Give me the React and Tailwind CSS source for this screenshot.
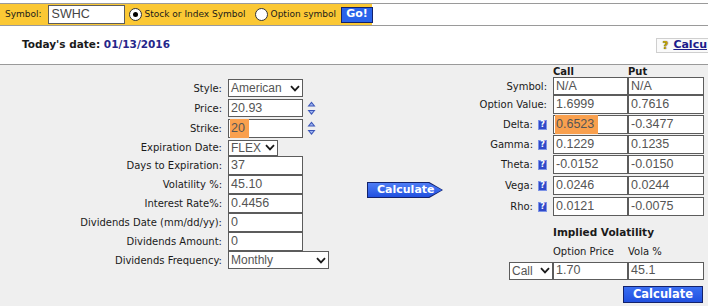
const Chevron = () => (
  <svg width="10" height="7" viewBox="0 0 10 7" className="shrink-0">
    <path d="M1 1.2 5 5.4 9 1.2" fill="none" stroke="#1a1a1a" strokeWidth="1.8" />
  </svg>
);

const Spinner = () => (
  <svg width="9" height="15" viewBox="0 0 9 15" className="shrink-0">
    <path d="M4.5 0.5 8.5 5.5 H0.5 Z" fill="#3b55b8" />
    <path d="M2.5 4.5 4.5 2.3 6.5 4.5Z" fill="#9fb4f0" />
    <path d="M0.5 9 H8.5 L4.5 14 Z" fill="#3b55b8" />
    <path d="M2.5 10 H6.5 L4.5 12.2Z" fill="#9fb4f0" />
  </svg>
);

const Help = () => (
  <span className="mr-[5px] flex h-[10px] w-[9px] items-center justify-center border border-[#7d93e6] bg-[#2f49c9] text-[8px] font-bold leading-none text-white">
    ?
  </span>
);

function Box({ children, w = 'w-[75px]', hl }) {
  return (
    <div className={`flex h-full ${w} items-center border border-[#5c5c5c] bg-white pl-[1px] font-['Liberation_Sans',sans-serif] text-[12.5px] text-[#555]`}>
      <span className={hl ? 'bg-[#f9a04e] pl-[1px] pr-[4px]' : 'pl-[1px]'}>{children}</span>
    </div>
  );
}

function Select({ children, w }) {
  return (
    <div className={`flex h-full ${w} items-center justify-between gap-[2px] border border-[#5c5c5c] bg-white pl-[2px] pr-[2px] font-['Liberation_Sans',sans-serif] text-[12px] text-[#555]`}>
      <span>{children}</span>
      <Chevron />
    </div>
  );
}

function Row({ label, h, children }) {
  return (
    <div className={`flex ${h} items-stretch`}>
      <div className="flex w-[228px] items-center justify-end whitespace-nowrap pr-[6px]">{label}</div>
      <div className="flex items-center gap-[4px]">{children}</div>
    </div>
  );
}

function GreekRow({ label, help, call, put, h = 'h-[19px]', mt = '', hl }) {
  return (
    <div className={`flex ${h} ${mt}`}>
      <div className="flex w-[103px] items-center justify-end pr-[1px]">
        <span className="mr-[5px]">{label}</span>
        {help && <Help />}
      </div>
      <Box hl={hl}>{call}</Box>
      <Box w="w-[76px]">{put}</Box>
    </div>
  );
}

export default function App() {
  return (
    <div className="h-[306px] w-[708px] overflow-hidden bg-white font-['DejaVu_Sans',sans-serif] text-[10px] text-[#1a1a1a]">
      {/* symbol bar */}
      <div className="mt-[3px] flex h-[23px] border-y border-[#9a9a9a]">
        <div className="flex w-[372px] shrink-0 items-center whitespace-nowrap bg-[#fbc834] pl-[5px] text-[9px]">
          <span className="shrink-0">Symbol:</span>
          <div className="ml-[6px] flex h-[19px] w-[77px] shrink-0 items-center border border-[#5c5c5c] bg-white pl-[3px] font-['Liberation_Sans',sans-serif] text-[12.5px] text-[#444]">
            SWHC
          </div>
          <span className="ml-[4px] flex h-[13px] w-[13px] shrink-0 items-center justify-center rounded-full border border-[#333] bg-white">
            <span className="h-[5px] w-[5px] rounded-full bg-black" />
          </span>
          <span className="ml-[3px] shrink-0">Stock or Index Symbol</span>
          <span className="ml-[9px] h-[13px] w-[13px] shrink-0 rounded-full border border-[#333] bg-white" />
          <span className="ml-[3px] shrink-0">Option symbol</span>
          <span className="ml-[5px] flex h-[16px] w-[32px] shrink-0 items-center justify-center border border-[#13226b] bg-[#2a63ea] text-[11px] font-bold text-white">
            Go!
          </span>
        </div>
      </div>

      {/* date line */}
      <div className="flex h-[39px] items-center justify-between border-b border-[#9a9a9a]">
        <div className="pl-[22px] text-[10.5px] font-bold">
          Today's date: <span className="text-[#26268a]">01/13/2016</span>
        </div>
        <div className="mr-[-24px] flex h-[15px] shrink-0 items-center whitespace-nowrap border border-[#cfcfcf] bg-[#fafafa] pl-[6px] pr-[24px]">
          <span className="font-bold text-[#c9a400] [text-shadow:0_0_1px_#222]">?</span>
          <span className="ml-[5px] text-[11px] font-bold text-[#1c1c8a] underline">Calcu</span>
        </div>
      </div>

      {/* calculator */}
      <div className="flex h-[241px] bg-[#efefef]">
        <div className="w-[345px] shrink-0 pt-[13px]">
          <Row label="Style:" h="h-[20px]">
            <div className="h-[18px]"><Select w="w-[75px]">American</Select></div>
          </Row>
          <Row label="Price:" h="h-[20px]">
            <div className="h-[18px]"><Box>20.93</Box></div>
            <Spinner />
          </Row>
          <Row label="Strike:" h="h-[21px]">
            <div className="h-[19px]"><Box hl>20</Box></div>
            <Spinner />
          </Row>
          <Row label="Expiration Date:" h="h-[17px]">
            <div className="h-[16px]"><Select w="w-[50px]">FLEX</Select></div>
          </Row>
          <Row label="Days to Expiration:" h="h-[19px]">
            <div className="h-[19px]"><Box>37</Box></div>
          </Row>
          <Row label="Volatility %:" h="h-[19px]">
            <div className="h-[19px]"><Box>45.10</Box></div>
          </Row>
          <Row label="Interest Rate%:" h="h-[19px]">
            <div className="h-[19px]"><Box>0.4456</Box></div>
          </Row>
          <Row label="Dividends Date (mm/dd/yy):" h="h-[19px]">
            <div className="h-[19px]"><Box>0</Box></div>
          </Row>
          <Row label="Dividends Amount:" h="h-[19px]">
            <div className="h-[19px]"><Box>0</Box></div>
          </Row>
          <Row label="Dividends Frequency:" h="h-[18px]">
            <div className="h-[18px]"><Select w="w-[101px]">Monthly</Select></div>
          </Row>
        </div>

        <div className="w-[105px] shrink-0 pl-[22px] pt-[117px]">
          <div className="relative h-[16px] w-[76px] bg-[#13226b] [clip-path:polygon(0_0,82%_0,100%_50%,82%_100%,0_100%)]">
            <div className="absolute inset-[1px] flex items-center bg-gradient-to-b from-[#4f7df5] to-[#2150e0] pl-[9px] text-[11px] font-bold text-white [clip-path:polygon(0_0,82%_0,100%_50%,82%_100%,0_100%)]">
              Calculate
            </div>
          </div>
        </div>

        <div className="flex-1">
          <div className="flex h-[12px] items-end font-bold">
            <span className="ml-[103px] w-[75px] leading-none">Call</span>
            <span className="leading-none">Put</span>
          </div>
          <GreekRow label="Symbol:" call="N/A" put="N/A" h="h-[18px]" />
          <GreekRow label="Option Value:" call="1.6999" put="0.7616" />
          <GreekRow label="Delta:" help call="0.6523" put="-0.3477" mt="mt-[1px]" hl />
          <GreekRow label="Gamma:" help call="0.1229" put="0.1235" mt="mt-[1px]" />
          <GreekRow label="Theta:" help call="-0.0152" put="-0.0150" mt="mt-[1px]" />
          <GreekRow label="Vega:" help call="0.0246" put="0.0244" mt="mt-[2px]" />
          <GreekRow label="Rho:" help call="0.0121" put="-0.0075" mt="mt-[2px]" />

          <div className="ml-[103px] mt-[9px] text-[10.5px] font-bold">Implied Volatility</div>
          <div className="ml-[103px] mt-[3px] flex">
            <span className="w-[75px]">Option Price</span>
            <span>Vola %</span>
          </div>
          <div className="mt-[3px] flex h-[18px]">
            <div className="ml-[59px] h-full"><Select w="w-[44px]">Call</Select></div>
            <Box>1.70</Box>
            <Box w="w-[76px]">45.1</Box>
          </div>
          <div className="mt-[6px] flex justify-end pr-[5px]">
            <div className="flex h-[17px] w-[80px] items-center justify-center border border-[#13226b] bg-gradient-to-b from-[#3a6ef2] to-[#2150e0] text-[11.5px] font-bold text-white">
              Calculate
            </div>
          </div>
        </div>
      </div>
    </div>
  );
}
